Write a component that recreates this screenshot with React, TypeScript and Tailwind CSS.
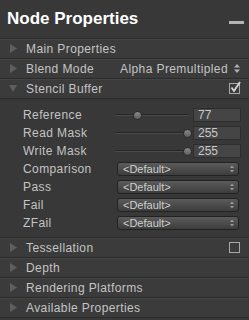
import React from "react";

const font = { fontFamily: '"Liberation Sans", Arial, sans-serif' };

function Arrow({ open = false }: { open?: boolean }) {
  return (
    <svg width="8" height="9" viewBox="0 0 8 9" className="shrink-0">
      {open ? <path d="M0 1 L8 1 L4 8 Z" fill="#5e5e5e" /> : <path d="M1 0 L8 4.5 L1 9 Z" fill="#5e5e5e" />}
    </svg>
  );
}

function Check({ checked }: { checked: boolean }) {
  return (
    <div className="w-[11px] h-[11px] border border-[#a8a8a8] relative">
      {checked && (
        <svg width="13" height="13" viewBox="0 0 13 13" className="absolute -top-[3px] -left-[1px]">
          <path d="M2.5 6.5 L5 10 L11 1" stroke="#d8d8d8" strokeWidth="1.8" fill="none" />
        </svg>
      )}
    </div>
  );
}

function Header({ label, open, right }: { label: string; open?: boolean; right?: React.ReactNode }) {
  return (
    <div className="h-[20px] flex items-center pl-[9px] pr-[9px] bg-[#3b3b3b] border-t border-[#2b2b2b] shadow-[inset_0_1px_0_#444]">
      <Arrow open={open} />
      <span className="ml-[9px] text-[12px] text-[#c4c4c4] tracking-[0.4px] flex-1">{label}</span>
      {right}
    </div>
  );
}

function SliderRow({ label, value }: { label: string; value: number }) {
  const pct = (value / 255) * 72;
  return (
    <div className="h-[18px] flex items-center">
      <span className="w-[92px] text-[12px] text-[#c4c4c4] tracking-[0.4px]">{label}</span>
      <div className="relative w-[74px] h-[10px] flex items-center">
        <div className="w-full h-[2px] bg-[#262626] border-b border-[#4a4a4a]" />
        <div
          className="absolute w-[9px] h-[9px] rounded-full bg-gradient-to-b from-[#8a8a8a] to-[#5e5e5e] border border-[#2c2c2c]"
          style={{ left: pct - 4 }}
        />
      </div>
      <div className="ml-[4px] w-[48px] h-[14px] bg-[#454545] border border-[#2d2d2d] flex items-center pl-[4px] text-[12px] text-[#c8c8c8]">
        {value}
      </div>
    </div>
  );
}

function DropRow({ label }: { label: string }) {
  return (
    <div className="h-[18px] flex items-center">
      <span className="w-[94px] text-[12px] text-[#c4c4c4] tracking-[0.4px]">{label}</span>
      <div className="w-[122px] h-[14px] rounded-[3px] border border-[#222] bg-gradient-to-b from-[#5b5b5b] to-[#3d3d3d] flex items-center pl-[5px] pr-[4px]">
        <span className="flex-1 text-[11px] text-[#cfcfcf] leading-none">&lt;Default&gt;</span>
        <svg width="4" height="8" viewBox="0 0 4 8">
          <path d="M0 3 L2 0.5 L4 3 Z M0 5 L2 7.5 L4 5 Z" fill="#9a9a9a" />
        </svg>
      </div>
    </div>
  );
}

export default function App() {
  return (
    <div className="w-[249px] h-[320px] bg-[#383838] overflow-hidden flex flex-col" style={font}>
      <div className="h-[38px] flex items-center pl-[7px] pr-[5px]">
        <span className="flex-1 text-[17px] font-bold text-white">Node Properties</span>
        <div className="w-[15px] h-[3px] bg-[#b4b4b4] mt-[6px]" />
      </div>
      <Header label="Main Properties" />
      <Header
        label="Blend Mode"
        right={
          <div className="flex items-center gap-[6px]">
            <span className="text-[12px] text-[#c4c4c4] tracking-[0.4px]">Alpha Premultipled</span>
            <svg width="6" height="9" viewBox="0 0 6 9">
              <path d="M0 3.5 L3 0 L6 3.5 Z M0 5.5 L3 9 L6 5.5 Z" fill="#b0b0b0" />
            </svg>
          </div>
        }
      />
      <Header label="Stencil Buffer" open right={<Check checked />} />
      <div className="flex flex-col pl-[23px] pt-[7px] pb-[5px] bg-[#383838] border-t border-[#2b2b2b]">
        <SliderRow label="Reference" value={77} />
        <SliderRow label="Read Mask" value={255} />
        <SliderRow label="Write Mask" value={255} />
        <DropRow label="Comparison" />
        <DropRow label="Pass" />
        <DropRow label="Fail" />
        <DropRow label="ZFail" />
      </div>
      <Header label="Tessellation" right={<Check checked={false} />} />
      <Header label="Depth" />
      <Header label="Rendering Platforms" />
      <Header label="Available Properties" />
      <div className="flex-1 border-t border-[#2b2b2b]" />
    </div>
  );
}
